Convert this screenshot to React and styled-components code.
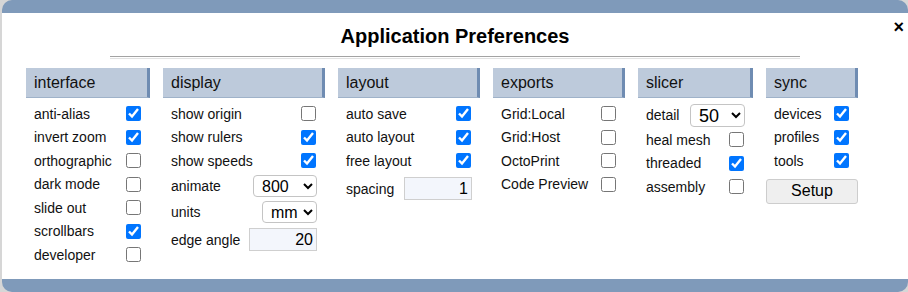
import styled, { createGlobalStyle } from "styled-components";

const GlobalStyle = createGlobalStyle`
  html, body {
    margin: 0;
    padding: 0;
    background: #d6d6d6;
    font-family: "Liberation Sans", Arial, sans-serif;
  }
`;

const Frame = styled.div`
  width: 906px;
  height: 292px;
  margin-left: 2px;
  box-sizing: border-box;
  padding: 13px 0;
  background: #7f9aba;
  border-radius: 10px;
`;

const Panel = styled.div`
  position: relative;
  height: 266px;
  background: #ffffff;
`;

const Close = styled.div`
  position: absolute;
  top: 4px;
  right: 4px;
  font-size: 18px;
  font-weight: bold;
  line-height: 20px;
  color: #000;
  cursor: pointer;
`;

const Title = styled.div`
  padding-top: 11px;
  text-align: center;
  font-size: 20px;
  font-weight: bold;
  line-height: 24px;
  color: #000;
`;

const Rule = styled.div`
  width: 690px;
  height: 1px;
  margin: 8px auto 0;
  border-top: 1px solid #a3a3a3;
  border-bottom: 1px solid #e2e2e2;
`;

const Columns = styled.div`
  display: flex;
  gap: 13px;
  padding: 9px 0 0 24px;
`;

const Column = styled.div`
  width: ${(p) => p.$w}px;
  display: flex;
  flex-direction: column;
`;

const Header = styled.div`
  height: 30px;
  box-sizing: border-box;
  padding-left: 8px;
  line-height: 29px;
  font-size: 16px;
  color: #111;
  background: #bdcadb;
  border-right: 3px solid #6f8cb2;
  border-bottom: 1px solid #9fb2c9;
`;

const Body = styled.div`
  display: flex;
  flex-direction: column;
  padding: 4px 8px 0;
`;

const Row = styled.label`
  display: flex;
  align-items: center;
  justify-content: space-between;
  height: ${(p) => p.$h || 23.5}px;
  font-size: 14px;
  color: #111;
`;

const Check = styled.input.attrs({ type: "checkbox" })`
  width: 15px;
  height: 15px;
  margin: 0 1px 0 0;
`;

const Select = styled.select`
  width: ${(p) => p.$w}px;
  height: ${(p) => p.$h || 22}px;
  box-sizing: border-box;
  padding: 0 2px 0 4px;
  font-family: "Liberation Sans", Arial, sans-serif;
  font-size: ${(p) => p.$fs || 16}px;
  color: #000;
  background: #fff;
  border: 1px solid #c4c4c4;
  border-radius: 4px;
`;

const NumInput = styled.input`
  width: 68px;
  height: 23px;
  box-sizing: border-box;
  padding: 0 3px;
  text-align: right;
  font-family: "Liberation Sans", Arial, sans-serif;
  font-size: 16px;
  color: #000;
  background: #f3f6fc;
  border: 1px solid #cfcfcf;
`;

const Button = styled.button`
  height: 25px;
  margin: 6px -8px 0;
  font-family: "Liberation Sans", Arial, sans-serif;
  font-size: 16px;
  color: #000;
  background: #efefef;
  border: 1px solid #cdcdcd;
  border-radius: 3px;
`;

const CheckRow = ({ label, on }) => (
  <Row>
    <span>{label}</span>
    <Check defaultChecked={on} />
  </Row>
);

const App = () => (
  <>
    <GlobalStyle />
    <Frame>
      <Panel>
        <Close>×</Close>
        <Title>Application Preferences</Title>
        <Rule />
        <Columns>
          <Column $w={124}>
            <Header>interface</Header>
            <Body>
              <CheckRow label="anti-alias" on />
              <CheckRow label="invert zoom" on />
              <CheckRow label="orthographic" />
              <CheckRow label="dark mode" />
              <CheckRow label="slide out" />
              <CheckRow label="scrollbars" on />
              <CheckRow label="developer" />
            </Body>
          </Column>

          <Column $w={162}>
            <Header>display</Header>
            <Body>
              <CheckRow label="show origin" />
              <CheckRow label="show rulers" on />
              <CheckRow label="show speeds" on />
              <Row $h={27}>
                <span>animate</span>
                <Select $w={64} defaultValue="800">
                  <option>0</option>
                  <option>400</option>
                  <option>800</option>
                  <option>1600</option>
                </Select>
              </Row>
              <Row $h={25}>
                <span>units</span>
                <Select $w={55} defaultValue="mm">
                  <option>mm</option>
                  <option>in</option>
                </Select>
              </Row>
              <Row $h={30}>
                <span>edge angle</span>
                <NumInput type="text" defaultValue="20" />
              </Row>
            </Body>
          </Column>

          <Column $w={142}>
            <Header>layout</Header>
            <Body>
              <CheckRow label="auto save" on />
              <CheckRow label="auto layout" on />
              <CheckRow label="free layout" on />
              <Row $h={32}>
                <span>spacing</span>
                <NumInput type="text" defaultValue="1" />
              </Row>
            </Body>
          </Column>

          <Column $w={132}>
            <Header>exports</Header>
            <Body>
              <CheckRow label="Grid:Local" />
              <CheckRow label="Grid:Host" />
              <CheckRow label="OctoPrint" />
              <CheckRow label="Code Preview" />
            </Body>
          </Column>

          <Column $w={115}>
            <Header>slicer</Header>
            <Body>
              <Row $h={26}>
                <span>detail</span>
                <Select $w={55} $h={23} $fs={18} defaultValue="50">
                  <option>100</option>
                  <option>75</option>
                  <option>50</option>
                  <option>25</option>
                </Select>
              </Row>
              <CheckRow label="heal mesh" />
              <CheckRow label="threaded" on />
              <CheckRow label="assembly" />
            </Body>
          </Column>

          <Column $w={92}>
            <Header>sync</Header>
            <Body>
              <CheckRow label="devices" on />
              <CheckRow label="profiles" on />
              <CheckRow label="tools" on />
              <Button>Setup</Button>
            </Body>
          </Column>
        </Columns>
      </Panel>
    </Frame>
  </>
);

export default App;
